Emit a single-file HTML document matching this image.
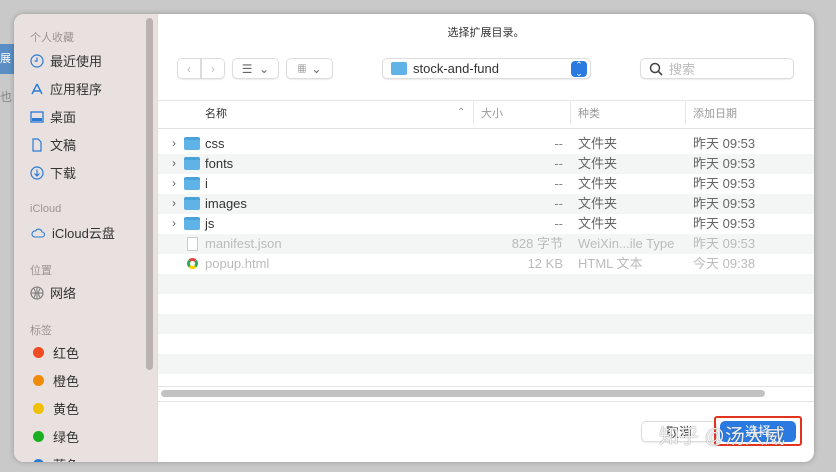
<!DOCTYPE html>
<html><head><meta charset="utf-8"><style>
*{margin:0;padding:0;box-sizing:border-box}
body{width:836px;height:472px;background:#c9c9c9;position:relative;overflow:hidden;font-family:"Liberation Sans","Noto Sans CJK SC",sans-serif;font-size:13px;color:#333}
.a{position:absolute}
.win{left:14px;top:14px;width:800px;height:448px;background:#fff;border-radius:10px;overflow:hidden;box-shadow:0 0 6px rgba(0,0,0,.25)}
.side{left:0;top:0;width:144px;height:448px;background:#e8e1df;border-right:1px solid #ddd}
.sh{font-size:11px;color:#9a9592;left:16px}
.si{left:16px;font-size:13px;color:#333;display:flex;align-items:center;gap:6px}
.ic{width:14px;height:14px;display:inline-block}
.dot{width:11px;height:11px;border-radius:50%;margin:0 3px 0 3px}
.btn{border:1px solid #ddd;border-radius:5px;background:#fff;height:21px;box-shadow:0 1px 1px rgba(0,0,0,.08);color:#666;font-size:12px;display:flex;align-items:center;justify-content:center}
.row{left:144px;width:656px;height:20px}
.g{background:#f4f5f5}
.cell{position:absolute;top:2px;font-size:13px;line-height:16px;height:16px;white-space:nowrap}
.sz{left:305px;width:100px;text-align:right}
.fold{position:absolute;left:26px;top:3px;width:16px;height:13px;background:#5fb3e6;border-radius:2px;border-top:3px solid #4aa3d8}
.ch{position:absolute;left:14px;top:1px;color:#666;font-size:12px;line-height:16px}
.hd{font-size:11px;color:#999;top:93px;line-height:14px}
</style></head><body>
<div class="a" style="left:0;top:44px;width:14px;height:30px;background:#5a8ec4;color:#fff;font-size:11px;line-height:30px">展</div>
<div class="a" style="left:0;top:88px;font-size:12px;color:#888">也</div>
<div class="a win">
 <div class="a side">
  <div class="a sh" style="top:15px">个人收藏</div>
  <div class="a si" style="top:37px"><svg class="ic" viewBox="0 0 14 14"><circle cx="7" cy="7" r="6" fill="none" stroke="#2b7bd6" stroke-width="1.2"/><path d="M7 3.5V7H4.5" fill="none" stroke="#2b7bd6" stroke-width="1.2"/></svg>最近使用</div>
  <div class="a si" style="top:65px"><svg class="ic" viewBox="0 0 14 14"><path d="M7 2L2 12M7 2l5 10M3 9h8" fill="none" stroke="#2b7bd6" stroke-width="1.4"/></svg>应用程序</div>
  <div class="a si" style="top:93px"><svg class="ic" viewBox="0 0 14 14"><rect x="1" y="2" width="12" height="10" fill="none" stroke="#2b7bd6" stroke-width="1.3"/><rect x="2" y="8" width="10" height="3" fill="#2b7bd6"/></svg>桌面</div>
  <div class="a si" style="top:121px"><svg class="ic" viewBox="0 0 14 14"><path d="M3 1h5l3 3v9H3z" fill="none" stroke="#2b7bd6" stroke-width="1.2"/></svg>文稿</div>
  <div class="a si" style="top:149px"><svg class="ic" viewBox="0 0 14 14"><circle cx="7" cy="7" r="6" fill="none" stroke="#2b7bd6" stroke-width="1.2"/><path d="M7 3.5V10M4.5 7.5L7 10l2.5-2.5" fill="none" stroke="#2b7bd6" stroke-width="1.2"/></svg>下载</div>
  <div class="a sh" style="top:189px">iCloud</div>
  <div class="a si" style="top:209px"><svg class="ic" viewBox="0 0 14 14" style="width:16px"><path d="M3.5 11h7.5a2.5 2.5 0 000-5 3.5 3.5 0 00-6.5-1A3 3 0 003.5 11z" fill="none" stroke="#2b7bd6" stroke-width="1.1"/></svg>iCloud云盘</div>
  <div class="a sh" style="top:248px">位置</div>
  <div class="a si" style="top:269px"><svg class="ic" viewBox="0 0 14 14"><circle cx="7" cy="7" r="6" fill="none" stroke="#777" stroke-width="1.1"/><path d="M1 7h12M7 1v12M4 2.5q3 4.5 0 9M10 2.5q-3 4.5 0 9" fill="none" stroke="#777" stroke-width="1"/></svg>网络</div>
  <div class="a sh" style="top:308px">标签</div>
  <div class="a si" style="top:329px"><span class="dot" style="background:#f04b23"></span>红色</div>
  <div class="a si" style="top:357px"><span class="dot" style="background:#f08a0a"></span>橙色</div>
  <div class="a si" style="top:385px"><span class="dot" style="background:#f0c000"></span>黄色</div>
  <div class="a si" style="top:413px"><span class="dot" style="background:#1aaf20"></span>绿色</div>
  <div class="a si" style="top:441px"><span class="dot" style="background:#2b7bd6"></span>蓝色</div>
  <div class="a" style="left:132px;top:4px;width:7px;height:352px;background:#bab2b0;border-radius:4px"></div>
 </div>
 <div class="a" style="left:144px;top:10px;width:656px;text-align:center;font-size:11px;color:#333">选择扩展目录。</div>
 <div class="a btn" style="left:163px;top:44px;width:24px;border-radius:5px 0 0 5px;color:#bbb">&#x2039;</div>
 <div class="a btn" style="left:187px;top:44px;width:24px;border-radius:0 5px 5px 0;color:#bbb">&#x203A;</div>
 <div class="a btn" style="left:218px;top:44px;width:47px">☰ &nbsp;⌄</div>
 <div class="a btn" style="left:272px;top:44px;width:47px;font-size:9px">▦ &nbsp;<span style="font-size:12px">⌄</span></div>
 <div class="a btn" style="left:368px;top:44px;width:209px;justify-content:flex-start;padding-left:8px;color:#333;font-size:13px"><span style="display:inline-block;width:16px;height:13px;background:#5fb3e6;border-radius:2px;margin-right:6px"></span>stock-and-fund
  <span style="position:absolute;right:3px;top:2px;width:16px;height:16px;background:#2a7ae2;border-radius:4px;color:#fff;font-size:9px;line-height:8px;text-align:center">⌃<br>⌄</span></div>
 <div class="a btn" style="left:626px;top:44px;width:154px;justify-content:flex-start;padding-left:8px;color:#bbb;font-size:13px"><svg width="14" height="14" viewBox="0 0 14 14" style="margin-right:6px"><circle cx="6" cy="6" r="4.5" fill="none" stroke="#444" stroke-width="1.5"/><path d="M9.3 9.3L13 13" stroke="#444" stroke-width="1.6"/></svg>搜索</div>
 <div class="a" style="left:144px;top:86px;width:656px;height:1px;background:#e6e6e6"></div>
 <div class="a" style="left:144px;top:114px;width:656px;height:1px;background:#e0e0e0"></div>
 <div class="a" style="left:191px;top:93px;font-size:11px;color:#333;line-height:14px">名称</div>
 <div class="a" style="left:443px;top:93px;font-size:10px;color:#999">⌃</div>
 <div class="a" style="left:459px;top:88px;width:1px;height:22px;background:#e6e6e6"></div>
 <div class="a" style="left:556px;top:88px;width:1px;height:22px;background:#e6e6e6"></div>
 <div class="a" style="left:671px;top:88px;width:1px;height:22px;background:#e6e6e6"></div>
 <div class="a hd" style="left:467px">大小</div>
 <div class="a hd" style="left:564px">种类</div>
 <div class="a hd" style="left:679px">添加日期</div>

 <div class="a row" style="top:120px"><span class="ch">›</span><span class="fold"></span><span class="cell" style="left:47px">css</span><span class="cell sz" style="color:#888">--</span><span class="cell" style="left:420px;color:#666">文件夹</span><span class="cell" style="left:535px;color:#666">昨天 09:53</span></div>
 <div class="a row g" style="top:140px"><span class="ch">›</span><span class="fold"></span><span class="cell" style="left:47px">fonts</span><span class="cell sz" style="color:#888">--</span><span class="cell" style="left:420px;color:#666">文件夹</span><span class="cell" style="left:535px;color:#666">昨天 09:53</span></div>
 <div class="a row" style="top:160px"><span class="ch">›</span><span class="fold"></span><span class="cell" style="left:47px">i</span><span class="cell sz" style="color:#888">--</span><span class="cell" style="left:420px;color:#666">文件夹</span><span class="cell" style="left:535px;color:#666">昨天 09:53</span></div>
 <div class="a row g" style="top:180px"><span class="ch">›</span><span class="fold"></span><span class="cell" style="left:47px">images</span><span class="cell sz" style="color:#888">--</span><span class="cell" style="left:420px;color:#666">文件夹</span><span class="cell" style="left:535px;color:#666">昨天 09:53</span></div>
 <div class="a row" style="top:200px"><span class="ch">›</span><span class="fold"></span><span class="cell" style="left:47px">js</span><span class="cell sz" style="color:#888">--</span><span class="cell" style="left:420px;color:#666">文件夹</span><span class="cell" style="left:535px;color:#666">昨天 09:53</span></div>
 <div class="a row g" style="top:220px;color:#bbb"><span style="position:absolute;left:29px;top:3px;width:11px;height:14px;border:1px solid #ccc;background:#fff"></span><span class="cell" style="left:47px">manifest.json</span><span class="cell sz">828 字节</span><span class="cell" style="left:420px">WeiXin...ile Type</span><span class="cell" style="left:535px">昨天 09:53</span></div>
 <div class="a row" style="top:240px;color:#bbb"><span style="position:absolute;left:29px;top:4px;width:11px;height:11px;border-radius:50%;border:3px solid #e7a;border-color:#d44 #3a5 #fc0 #3a5"></span><span class="cell" style="left:47px">popup.html</span><span class="cell sz">12 KB</span><span class="cell" style="left:420px">HTML 文本</span><span class="cell" style="left:535px">今天 09:38</span></div>
 <div class="a row g" style="top:260px"></div>
 <div class="a row g" style="top:300px"></div>
 <div class="a row g" style="top:340px"></div>
 <div class="a" style="left:144px;top:372px;width:656px;height:1px;background:#e3e3e3"></div>
 <div class="a" style="left:147px;top:376px;width:604px;height:7px;background:#c2c2c2;border-radius:4px"></div>
 <div class="a" style="left:144px;top:387px;width:656px;height:1px;background:#e3e3e3"></div>
 <div class="a btn" style="left:627px;top:407px;width:76px;color:#333;font-size:13px">取消</div>
 <div class="a" style="left:700px;top:402px;width:88px;height:30px;border:2px solid #e0341e;border-radius:3px"></div>
 <div class="a" style="left:706px;top:407px;width:76px;height:21px;background:#2a7ae2;border-radius:5px;color:#fff;font-size:13px;text-align:center;line-height:21px">选择</div>
 <div class="a" style="left:645px;top:406px;font-size:20px;color:rgba(255,255,255,.9);text-shadow:0 0 1px #555">知乎 @汤大威</div>
</div>
</body></html>
